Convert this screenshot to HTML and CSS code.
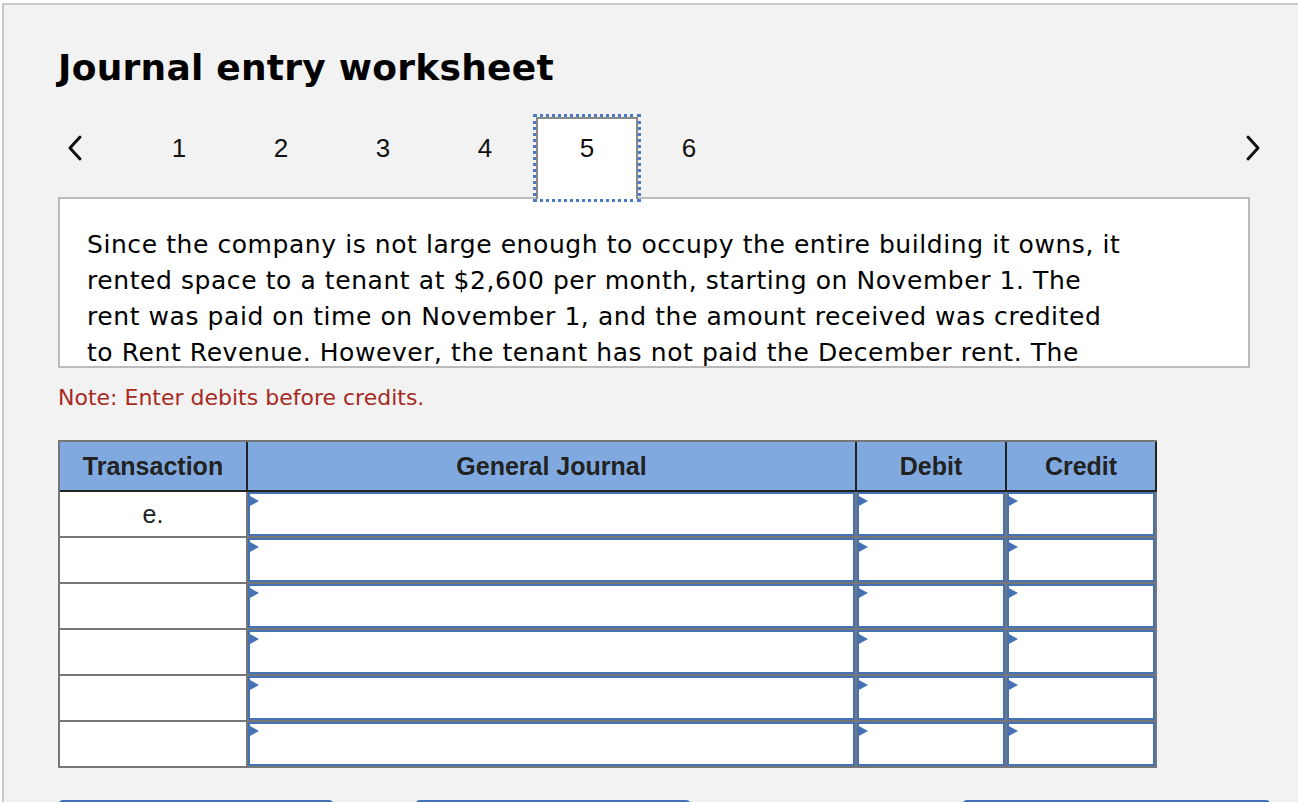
FILE: index.html
```html
<!DOCTYPE html>
<html lang="en">
<head>
  <meta charset="UTF-8">
  <meta name="viewport" content="width=device-width, initial-scale=1.0">
  <link rel="stylesheet" href="styles.css">
  <title>Journal entry worksheet</title>
</head>
<body>
  <div class="worksheet">
    <h1 class="title">Journal entry worksheet</h1>

    <!-- step navigation -->
    <div class="steps">
      <button class="arrow prev" aria-label="Previous">
        <svg width="18" height="28" viewBox="0 0 18 28"><path d="M14 3 L4 14 L14 25" fill="none" stroke="#111" stroke-width="3" stroke-linecap="round" stroke-linejoin="round"/></svg>
      </button>
      <div class="tab">1</div>
      <div class="tab">2</div>
      <div class="tab">3</div>
      <div class="tab">4</div>
      <div class="tab active">5</div>
      <div class="tab">6</div>
      <button class="arrow next" aria-label="Next">
        <svg width="18" height="28" viewBox="0 0 18 28"><path d="M4 3 L14 14 L4 25" fill="none" stroke="#111" stroke-width="3" stroke-linecap="round" stroke-linejoin="round"/></svg>
      </button>
    </div>

    <div class="question">
      <p>Since the company is not large enough to occupy the entire building it owns, it rented space to a tenant at $2,600 per month, starting on November 1. The rent was paid on time on November 1, and the amount received was credited to Rent Revenue. However, the tenant has not paid the December rent. The company has worked out an agreement with the tenant, who has promised to pay the December rent in January.</p>
    </div>

    <p class="note">Note: Enter debits before credits.</p>

    <table class="journal">
      <thead>
        <tr>
          <th class="col-trans">Transaction</th>
          <th class="col-account">General Journal</th>
          <th class="col-amount">Debit</th>
          <th class="col-amount">Credit</th>
        </tr>
      </thead>
      <tbody>
        <tr>
          <td class="trans">e.</td>
          <td><div class="field"></div></td>
          <td><div class="field"></div></td>
          <td><div class="field"></div></td>
        </tr>
        <tr>
          <td class="trans"></td>
          <td><div class="field"></div></td>
          <td><div class="field"></div></td>
          <td><div class="field"></div></td>
        </tr>
        <tr>
          <td class="trans"></td>
          <td><div class="field"></div></td>
          <td><div class="field"></div></td>
          <td><div class="field"></div></td>
        </tr>
        <tr>
          <td class="trans"></td>
          <td><div class="field"></div></td>
          <td><div class="field"></div></td>
          <td><div class="field"></div></td>
        </tr>
        <tr>
          <td class="trans"></td>
          <td><div class="field"></div></td>
          <td><div class="field"></div></td>
          <td><div class="field"></div></td>
        </tr>
        <tr>
          <td class="trans"></td>
          <td><div class="field"></div></td>
          <td><div class="field"></div></td>
          <td><div class="field"></div></td>
        </tr>
      </tbody>
    </table>

    <div class="actions">
      <button class="action record">Record entry</button>
      <button class="action clear">Clear entry</button>
      <button class="action view">View general journal</button>
    </div>
  </div>
</body>
</html>
```

FILE: styles.css
```css
body {
  margin: 0;
  background-color: #fff;
}

.worksheet {
  margin: 3px 0 0 2px;
  padding: 41px 0 40px 0;
  border-top: 2px solid #c8c8c8;
  border-left: 2px solid #c8c8c8;
  background-color: #f2f2f2;
}

.title {
  margin: 0 0 0 54px;
  font-family: "DejaVu Sans", Verdana, sans-serif;
  font-size: 36px;
  letter-spacing: 0.25px;
  line-height: 44px;
  font-weight: bold;
  color: #000;
}

/* step tabs */
.steps {
  display: flex;
  align-items: flex-start;
  height: 80px;
  margin-top: 27px;
  padding: 0 36px 0 62px;
}

.arrow {
  display: flex;
  align-items: center;
  padding: 0;
  margin-top: 17px;
  border: none;
  background: none;
  cursor: pointer;
}

.arrow.prev {
  width: 62px;
}

.arrow.next {
  margin-left: auto;
}

.tab {
  position: relative;
  width: 102px;
  height: 80px;
  padding-top: 16px;
  box-sizing: border-box;
  text-align: center;
  font-family: "Liberation Sans", Arial, sans-serif;
  font-size: 26px;
  line-height: 30px;
  color: #111;
}

.tab.active {
  z-index: 1;
  height: 82px;
  border: 2px solid #888;
  border-bottom: none;
  padding-top: 14px;
  background-color: #fff;
  outline: 3px dotted #4a7ac4;
  outline-offset: 0;
}

/* question text */
.question {
  margin-left: 54px;
  width: 1188px;
  height: 167px;
  overflow: hidden;
  border: 2px solid #bbb;
  background-color: #fff;
  box-sizing: content-box;
}

.question p {
  margin: 0;
  padding: 28px 0 0 27px;
  max-width: 1040px;
  font-family: "DejaVu Sans", Verdana, sans-serif;
  font-size: 25px;
  letter-spacing: 0.57px;
  line-height: 36px;
  color: #000;
}

.note {
  margin: 15px 0 0 54px;
  font-family: "DejaVu Sans", Verdana, sans-serif;
  font-size: 22px;
  line-height: 30px;
  color: #a52a22;
}

/* journal grid */
.journal {
  margin: 27px 0 0 54px;
  border-collapse: separate;
  border-spacing: 0;
  border-top: 2px solid #777;
  border-left: 2px solid #777;
  font-family: "Liberation Sans", Arial, sans-serif;
}

.journal th {
  height: 48px;
  padding: 0;
  background-color: #80aadf;
  border-right: 2px solid #222;
  border-bottom: 2px solid #222;
  font-size: 25px;
  font-weight: bold;
  color: #222;
  box-sizing: content-box;
}

.col-trans {
  width: 186px;
}

.col-account {
  width: 607px;
}

.col-amount {
  width: 148px;
}

.journal td {
  height: 44px;
  padding: 0;
  background-color: #fff;
  border-right: 2px solid #777;
  border-bottom: 2px solid #777;
  box-sizing: content-box;
}

.journal td.trans {
  text-align: center;
  font-size: 25px;
  color: #222;
}

.field {
  position: relative;
  height: 44px;
  border: 2px solid #4472b4;
  box-sizing: border-box;
}

/* little flag marking the input cell */
.field::before {
  content: "";
  position: absolute;
  top: 1px;
  left: -2px;
  border-top: 6px solid transparent;
  border-bottom: 6px solid transparent;
  border-left: 11px solid #4472b4;
}

/* buttons below the grid */
.actions {
  display: flex;
  margin: 32px 0 0 54px;
}

.action {
  height: 44px;
  padding: 0 16px;
  border: 2px solid #4472b4;
  border-radius: 5px;
  background-color: #fff;
  color: #4472b4;
  font-family: "Liberation Sans", Arial, sans-serif;
  font-size: 18px;
  cursor: pointer;
}

.action.record {
  width: 276px;
}

.action.clear {
  width: 276px;
  margin-left: 81px;
}

.action.view {
  width: 309px;
  margin-left: 271px;
}
```
